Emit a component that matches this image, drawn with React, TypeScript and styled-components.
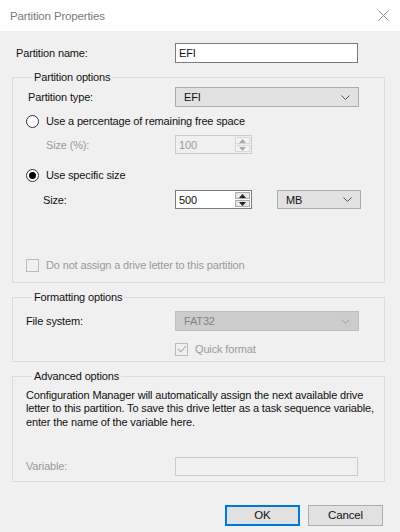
import React from 'react'
import styled, { createGlobalStyle } from 'styled-components'

const FONT = `'Liberation Sans', Arial, sans-serif`

const GlobalStyles = createGlobalStyle`
  html, body {
    margin: 0;
    padding: 0;
    background: #f0f0f0;
  }
  body, body * {
    font-family: ${FONT};
    box-sizing: border-box;
    letter-spacing: -0.15px;
  }
`

const Window = styled.div`
  width: 400px;
  height: 532px;
  background: #f0f0f0;
  display: flex;
  flex-direction: column;
  font-size: 11px;
  color: #111;
`

const TitleBar = styled.div`
  height: 31px;
  background: #fff;
  display: flex;
  align-items: center;
  justify-content: space-between;
  padding: 0 11px 0 10px;
  flex-shrink: 0;
`

const Title = styled.span`
  color: #7a7a7a;
  font-size: 11.5px;
`

const CloseIcon = styled.svg`
  width: 11px;
  height: 11px;
`

const Body = styled.div`
  display: flex;
  flex-direction: column;
  padding: 12px 15px 0 12px;
`

const Row = styled.div<{ $label: number; $h: number; $mt: number; $indent?: number }>`
  display: grid;
  grid-template-columns: ${(p) => p.$label}px 1fr;
  align-items: center;
  height: ${(p) => p.$h}px;
  margin-top: ${(p) => p.$mt}px;
  padding-left: ${(p) => p.$indent ?? 0}px;
`

const Label = styled.span<{ $disabled?: boolean }>`
  color: ${(p) => (p.$disabled ? '#9a9a9a' : '#111')};
  white-space: nowrap;
`

const Group = styled.fieldset<{ $mt: number; $pb: number }>`
  margin: ${(p) => p.$mt}px 0 0 0;
  padding: 0 24px ${(p) => p.$pb}px 13px;
  border: 1px solid #dcdcdc;
  min-width: 0;
`

const Legend = styled.legend`
  padding: 0 2px;
  margin-left: 6px;
  line-height: 14px;
  height: 14px;
  font-size: 11px;
`

const TextInput = styled.div<{ $w: number; $disabled?: boolean }>`
  width: ${(p) => p.$w}px;
  height: 100%;
  background: ${(p) => (p.$disabled ? '#f0f0f0' : '#fff')};
  border: 1px solid ${(p) => (p.$disabled ? '#cccccc' : '#7a7a7a')};
  display: flex;
  align-items: center;
  padding-left: 3px;
  color: ${(p) => (p.$disabled ? '#9a9a9a' : '#111')};
`

const Select = styled.div<{ $w: number; $disabled?: boolean }>`
  width: ${(p) => p.$w}px;
  height: 100%;
  background: ${(p) => (p.$disabled ? '#cccccc' : '#e1e1e1')};
  border: 1px solid ${(p) => (p.$disabled ? '#bfbfbf' : '#adadad')};
  display: flex;
  align-items: center;
  justify-content: space-between;
  padding: 0 8px 0 8px;
  color: ${(p) => (p.$disabled ? '#838383' : '#111')};
`

const Chevron = ({ color }: { color: string }) => (
  <svg width="9" height="5" viewBox="0 0 9 5">
    <path d="M0.5 0.5 L4.5 4.5 L8.5 0.5" fill="none" stroke={color} strokeWidth="1" />
  </svg>
)

const Controls = styled.div`
  display: flex;
  align-items: center;
  height: 100%;
  gap: 25px;
`

const Spinner = styled.div<{ $disabled?: boolean }>`
  width: 77px;
  height: 100%;
  background: ${(p) => (p.$disabled ? '#f0f0f0' : '#fff')};
  border: 1px solid ${(p) => (p.$disabled ? '#cccccc' : '#7a7a7a')};
  display: flex;
  align-items: center;
  justify-content: space-between;
  padding: 1px 1px 1px 3px;
  color: ${(p) => (p.$disabled ? '#9a9a9a' : '#111')};
`

const SpinButtons = styled.div`
  width: 15px;
  height: 100%;
  display: flex;
  flex-direction: column;
  gap: 1px;
`

const SpinButton = styled.div<{ $disabled?: boolean }>`
  flex: 1;
  background: ${(p) => (p.$disabled ? '#f4f4f4' : '#e6e6e6')};
  border: 1px solid ${(p) => (p.$disabled ? '#d9d9d9' : '#adadad')};
  display: flex;
  align-items: center;
  justify-content: center;
`

const Arrow = ({ up, color }: { up?: boolean; color: string }) => (
  <svg width="7" height="4" viewBox="0 0 7 4">
    <path d={up ? 'M0 4 L3.5 0 L7 4 Z' : 'M0 0 L3.5 4 L7 0 Z'} fill={color} />
  </svg>
)

const Option = styled.label<{ $mt: number; $indent?: number; $disabled?: boolean }>`
  display: flex;
  align-items: center;
  gap: 7px;
  height: 14px;
  margin-top: ${(p) => p.$mt}px;
  padding-left: ${(p) => p.$indent ?? 0}px;
  color: ${(p) => (p.$disabled ? '#9a9a9a' : '#111')};
  white-space: nowrap;
`

const Radio = styled.span<{ $checked?: boolean }>`
  width: 13px;
  height: 13px;
  border-radius: 50%;
  border: 1px solid #333;
  background: #fff;
  display: flex;
  align-items: center;
  justify-content: center;
  &::after {
    content: '';
    width: 7px;
    height: 7px;
    border-radius: 50%;
    background: ${(p) => (p.$checked ? '#000' : 'transparent')};
  }
`

const Check = styled.span`
  width: 13px;
  height: 13px;
  border: 1px solid #bcbcbc;
  background: #f0f0f0;
  display: flex;
  align-items: center;
  justify-content: center;
`

const Paragraph = styled.p`
  margin: 6px -14px 0 0;
  line-height: 13.3px;
  font-size: 11px;
`

const Footer = styled.div`
  display: flex;
  justify-content: flex-end;
  gap: 8px;
  padding: 23px 17px 0 0;
`

const Button = styled.button<{ $primary?: boolean }>`
  width: 75px;
  height: 21px;
  background: #e1e1e1;
  border: ${(p) => (p.$primary ? '2px solid #0078d7' : '1px solid #adadad')};
  font-size: 11.5px;
  color: #111;
  padding: 0;
`

export default function App() {
  return (
    <Window>
      <GlobalStyles />
      <TitleBar>
        <Title>Partition Properties</Title>
        <CloseIcon viewBox="0 0 11 11">
          <path d="M0.5 0.5 L10.5 10.5 M10.5 0.5 L0.5 10.5" stroke="#8a8a8a" strokeWidth="1" />
        </CloseIcon>
      </TitleBar>

      <Body>
        <Row $label={159} $h={20} $mt={0} $indent={4}>
          <Label>Partition name:</Label>
          <TextInput $w={183}>EFI</TextInput>
        </Row>

        <Group $mt={7} $pb={10}>
          <Legend>Partition options</Legend>
          <Row $label={147} $h={20} $mt={3} $indent={2}>
            <Label>Partition type:</Label>
            <Select $w={184}>
              <span>EFI</span>
              <Chevron color="#555" />
            </Select>
          </Row>

          <Option $mt={7}>
            <Radio />
            Use a percentage of remaining free space
          </Option>

          <Row $label={129} $h={19} $mt={7} $indent={20}>
            <Label $disabled>Size (%):</Label>
            <Spinner $disabled>
              <span>100</span>
              <SpinButtons>
                <SpinButton $disabled>
                  <Arrow up color="#a8a8a8" />
                </SpinButton>
                <SpinButton $disabled>
                  <Arrow color="#a8a8a8" />
                </SpinButton>
              </SpinButtons>
            </Spinner>
          </Row>

          <Option $mt={14}>
            <Radio $checked />
            Use specific size
          </Option>

          <Row $label={132} $h={19} $mt={8} $indent={17}>
            <Label>Size:</Label>
            <Controls>
              <Spinner>
                <span>500</span>
                <SpinButtons>
                  <SpinButton>
                    <Arrow up color="#222" />
                  </SpinButton>
                  <SpinButton>
                    <Arrow color="#222" />
                  </SpinButton>
                </SpinButtons>
              </Spinner>
              <Select $w={84}>
                <span>MB</span>
                <Chevron color="#555" />
              </Select>
            </Controls>
          </Row>

          <Option $mt={49} $disabled>
            <Check />
            Do not assign a drive letter to this partition
          </Option>
        </Group>

        <Group $mt={7} $pb={5}>
          <Legend>Formatting options</Legend>
          <Row $label={149} $h={20} $mt={7}>
            <Label>File system:</Label>
            <Select $w={184} $disabled>
              <span>FAT32</span>
              <Chevron color="#a0a0a0" />
            </Select>
          </Row>
          <Option $mt={11} $indent={149} $disabled>
            <Check>
              <svg width="10" height="8" viewBox="0 0 10 8">
                <path d="M1 4 L3.8 6.8 L9 1" fill="none" stroke="#a8a8a8" strokeWidth="1.1" />
              </svg>
            </Check>
            Quick format
          </Option>
        </Group>

        <Group $mt={7} $pb={5}>
          <Legend>Advanced options</Legend>
          <Paragraph>
            Configuration Manager will automatically assign the next available drive letter to
            this partition. To save this drive letter as a task sequence variable, enter the
            name of the variable here.
          </Paragraph>
          <Row $label={149} $h={19} $mt={28}>
            <Label $disabled>Variable:</Label>
            <TextInput $w={183} $disabled />
          </Row>
        </Group>
      </Body>

      <Footer>
        <Button $primary>OK</Button>
        <Button>Cancel</Button>
      </Footer>
    </Window>
  )
}
